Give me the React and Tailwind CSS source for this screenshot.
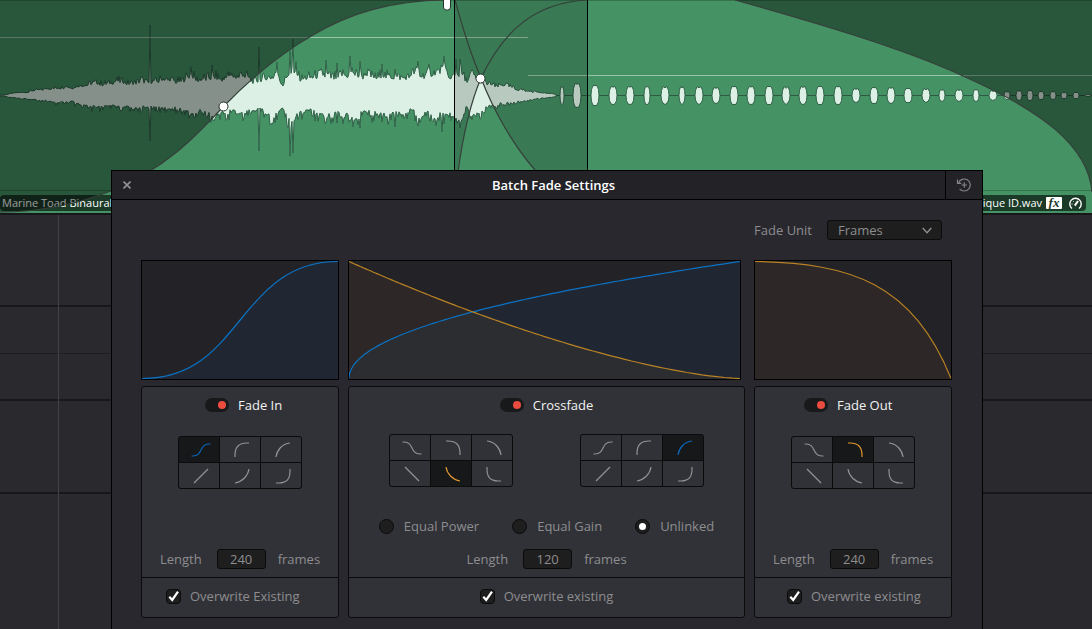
import React, { useState } from "react";

const MID = 95;

// [x, peak height] of the waveform envelope
const ENVELOPE = [
  [0, 0], [4, 0], [10, 2], [25, 4], [43, 8], [67, 12], [72, 10], [90, 18],
  [120, 19], [133, 18], [141, 23], [147, 16], [150, 17], [163, 23], [175, 19],
  [190, 27], [200, 23], [212, 30], [222, 25], [232, 28], [247, 28], [254, 20],
  [266, 28], [277, 32], [283, 17], [288, 36], [296, 36], [300, 25], [312, 28],
  [326, 32], [338, 28], [350, 34], [360, 32], [374, 28], [384, 32], [395, 27],
  [408, 26], [418, 33], [430, 29], [443, 34], [450, 24], [455, 34], [460, 36],
  [466, 22], [472, 28], [480, 25], [486, 17], [495, 13], [505, 15], [512, 10],
  [525, 7], [540, 4], [550, 2], [557, 1],
];

// [x, reach above, reach below]
const SPIKES = [
  [150, 70, 45], [259, 48, 55], [290, 44, 60], [293, 56, 57], [277, 33, 24],
  [326, 35, 26], [337, 32, 27], [350, 39, 24], [360, 34, 32], [382, 31, 26],
  [395, 26, 31], [418, 34, 30], [429, 31, 22], [444, 39, 28], [442, 28, 36],
  [456, 36, 22], [460, 36, 32], [191, 28, 18], [212, 30, 20],
];

// [centre, half width, half height] of the separate calls
const CALLS = [
  [562, 2, 9], [577, 4, 12], [595, 4, 10], [613, 4, 9], [630, 4, 9],
  [647, 3, 9], [665, 4, 9], [682, 3, 9], [699, 4, 9], [716, 4, 8],
  [734, 4, 9], [751, 4, 9], [769, 4, 9], [786, 4, 9], [803, 4, 9],
  [820, 4, 9], [838, 4, 9], [856, 4, 7], [874, 4, 8], [891, 4, 8],
  [908, 4, 7], [926, 4, 7], [942, 3, 6], [959, 4, 6], [976, 3, 6],
  [993, 4, 5], [1007, 3, 4], [1019, 3, 5], [1030, 3, 5], [1041, 3, 4],
  [1053, 3, 4], [1064, 3, 3], [1076, 3, 3], [1088, 3, 1],
];

const noise = (n) => {
  const v = Math.sin(n * 12.9898) * 43758.5453;
  return v - Math.floor(v);
};

const envelopeAt = (x) => {
  const i = ENVELOPE.findIndex((p) => p[0] > x);
  if (i < 1) return 0;
  const [x0, y0] = ENVELOPE[i - 1];
  const [x1, y1] = ENVELOPE[i];
  return y0 + ((y1 - y0) * (x - x0)) / (x1 - x0);
};

const buildWave = () => {
  const top = [];
  const bottom = [];
  for (let x = 0; x < 557; x++) {
    const env = envelopeAt(x);
    const spike = SPIKES.find((s) => s[0] === x);
    const up = spike
      ? spike[1]
      : env * (0.5 + 0.18 * noise(Math.floor(x / 5) + 7) + 0.32 * noise(x) ** 2);
    const down = spike
      ? spike[2]
      : env * (0.46 + 0.22 * noise(Math.floor(x / 5) + 51) + 0.32 * noise(x + 900) ** 2);
    top.push(`${x} ${(MID - up).toFixed(1)}`);
    bottom.unshift(`${x} ${(MID + 1 + down).toFixed(1)}`);
  }
  return `M${top.join("L")}L${bottom.join("L")}Z`;
};

const callPath = ([c, w, h]) => {
  const n = h * (0.8 + 0.2 * noise(c));
  const m = MID + 0.5;
  return `M${c - w} ${m}Q${c - w} ${m - n * 0.7} ${c - w / 2} ${m - h}L${c} ${m - n}L${c + w / 2} ${m - h}Q${c + w} ${m - n * 0.7} ${c + w} ${m}Q${c + w} ${m + n * 0.7} ${c + w / 2} ${m + n}L${c} ${m + h}L${c - w / 2} ${m + n}Q${c - w} ${m + n * 0.7} ${c - w} ${m}Z`;
};

const WAVE = buildWave();
const CALL_PATH = CALLS.map(callPath).join("");

const FADE_IN = "C40 212 80 203 111 191C165 169 195 137 223 107C253 76 285 51 313 35C350 13 390 1 445 0";
const FADE_OUT = "C810 21 900 47 963 76C1040 110 1088 145 1092 192";
const CROSS_OUT_TOP = "C461 22 471 55 481 78";
const CROSS_OUT_BOTTOM = "C494 112 514 146 535 170";
const CROSS_IN_TOP = "C502 34 532 3 587 0";

const curvePoints = (w, h, fn) => {
  const pts = [];
  for (let i = 0; i <= 100; i++) {
    const t = (i / 100) ** 2;
    pts.push(`${(t * w).toFixed(1)} ${(h - 0.5 - fn(t) * (h - 1)).toFixed(1)}`);
  }
  return `M${pts.join("L")}`;
};

const BLUE = "#0b72c4";
const ORANGE = "#b98224";

const CURVES = [
  "M.5 14H2C7 14 8.500 11 10 8S13 2 18 2H19.500",
  "M3 15V13C3 5 7 1 15 1H17",
  "M3 15C4 8 9 2 17 1",
  "M3 15L17 1",
  "M3 15C10 14 16 8 17 1",
  "M3 15H6C14 15 17 11 17 3V1",
];
const CURVE_NAMES = ["S-curve", "Fast", "Convex", "Linear", "Concave", "Slow"];

function Timeline() {
  return (
    <div className="flex min-h-screen flex-col">
      <section className="relative h-[213px] shrink-0 overflow-hidden bg-[#459265]">
        <svg className="absolute inset-0 h-full w-full" viewBox="0 0 1092 213" preserveAspectRatio="none">
          <path d="M0 .5H1092M0 190.500H1092" stroke="#000" strokeOpacity=".22" />
          <path d="M0 95.500H1092" stroke="#2c5a42" />
          <path d={WAVE + CALL_PATH} fill="#dcf0e5" stroke="#2f6147" strokeWidth="1" />
          <path d="M0 37.500H528M528 75.500H1092" stroke="#fff" strokeOpacity=".45" />
        </svg>

        {/* clip names */}
        <div className="absolute inset-x-0 bottom-0 flex h-[18px] pr-[6px] pb-[2px]">
          <div className="flex flex-1 items-center justify-between rounded-sm bg-black/60 pr-1 pl-[2px] text-[11px] leading-4 text-white">
            <span>Marine Toad Binaural</span>
            <div className="flex items-center">
              <span>ique ID.wav</span>
              <span className="mr-[7px] ml-1 flex h-3 w-4 items-center justify-center rounded-[1px] bg-white font-['Liberation_Serif',serif] text-[13px] font-bold text-[#1c3929] italic">
                fx
              </span>
              <svg width="13" height="13" viewBox="0 0 13 13" fill="none" stroke="#fff" strokeWidth="1.400">
                <path d="M3 11.500A5.700 5.700 0 1 1 10 11.500" />
                <path d="M5.800 8.600L9 4" strokeWidth="2" />
                <path d="M2.500 7h1M4 4l.6.6" strokeWidth="1" />
              </svg>
            </div>
          </div>
        </div>

        {/* fade shading and handles */}
        <svg className="absolute inset-0 h-full w-full" viewBox="0 0 1092 213" preserveAspectRatio="none" fill="none">
          <path d={`M0 212${FADE_IN}H0Z`} fill="#000" fillOpacity=".4" />
          <path d={`M735 0${FADE_OUT}V0Z`} fill="#000" fillOpacity=".4" />
          <path
            d={`M455 0H587V213H535V170C514 146 494 112 481 78C470 104 463 135 458 172V213H455Z`}
            fill="#000"
            fillOpacity=".16"
          />
          <g stroke="#35403a" strokeWidth="1.200">
            <path d={`M0 212${FADE_IN}`} />
            <path d={`M735 0${FADE_OUT}`} />
            <path d={`M455 0${CROSS_OUT_TOP}${CROSS_OUT_BOTTOM}`} />
            <path d={`M458 172C463 135 470 104 481 78${CROSS_IN_TOP}`} />
          </g>
          <path d="M454.500 0V213M587.500 0V213" stroke="#000" />
          <g fill="#fff" stroke="#26332b" strokeWidth="1">
            <circle cx="223.500" cy="106.500" r="4.500" />
            <circle cx="480.500" cy="78.500" r="4.500" />
            <rect x="443.500" y="-6" width="7" height="16" rx="3" />
          </g>
        </svg>
      </section>

      {/* empty tracks */}
      <div className="relative flex flex-1 flex-col border-t-2 border-[#18171b] bg-[#2a292e]">
        <div className="h-[92px] border-b-2 border-[#18171b]"></div>
        <div className="h-[47px] border-b border-[#1e1d21]"></div>
        <div className="h-[47px] border-b-2 border-[#18171b]"></div>
        <div className="h-[93px] border-b-2 border-[#18171b]"></div>
        <div className="absolute inset-y-0 left-[58px] w-px bg-[#424146]"></div>
      </div>
    </div>
  );
}

function Graph({ width, lines, className = "" }) {
  return (
    <div className={`h-[120px] border border-black bg-[#232227] ${className}`}>
      <svg className="block h-full w-full" viewBox={`0 0 ${width} 118`} preserveAspectRatio="none" fill="none">
        {lines.map((l) => (
          <path key={l.color} d={`${l.d}L${width} 118L0 118Z`} fill={l.color} fillOpacity=".07" />
        ))}
        {lines.map((l) => (
          <path key={l.color} d={l.d} stroke={l.color} strokeWidth="1.200" />
        ))}
      </svg>
    </div>
  );
}

function CurvePicker({ label, out, initial }) {
  const [selected, setSelected] = useState(initial);
  const activeColor = out ? "text-[#e0962c]" : "text-[#0b66b8]";

  return (
    <div
      role="group"
      aria-label={label}
      className="grid grid-cols-3 gap-px overflow-hidden rounded-[3px] border border-[#0b0b0c] bg-[#0b0b0c]"
    >
      {CURVES.map((d, i) => (
        <button
          key={d}
          type="button"
          aria-label={CURVE_NAMES[i]}
          aria-pressed={selected === i}
          onClick={() => setSelected(i)}
          className={`flex h-[25px] w-10 items-center justify-center pl-[3px] ${
            selected === i ? `bg-[#17181a] ${activeColor}` : "bg-[#313237] text-[#929294]"
          }`}
        >
          <svg
            width="20"
            height="16"
            viewBox="0 0 20 16"
            fill="none"
            stroke="currentColor"
            strokeWidth="1.200"
            className={out ? "-scale-x-100" : ""}
          >
            <path d={d} />
          </svg>
        </button>
      ))}
    </div>
  );
}

function FadeCard({ id, title, overwriteLabel, length, headClass, footClass, children }) {
  const [enabled, setEnabled] = useState(true);
  const [value, setValue] = useState(length);
  const [overwrite, setOverwrite] = useState(true);

  return (
    <section className="flex h-[232px] flex-col rounded-[3px] border border-[#0b0b0c] bg-[#313237]">
      <div className={`flex h-9 items-center gap-[9px] ${headClass}`}>
        <button
          type="button"
          role="switch"
          aria-checked={enabled}
          aria-labelledby={`${id}-title`}
          onClick={() => setEnabled(!enabled)}
          className={`flex h-[14px] w-6 items-center rounded-full bg-[#18191a] px-[3px] ${
            enabled ? "justify-end" : "justify-start"
          }`}
        >
          <span className={`size-2 rounded-full ${enabled ? "bg-[#ea4d3f]" : "bg-[#77777a]"}`}></span>
        </button>
        <h2 id={`${id}-title`} className="text-[#f2f2f2]">
          {title}
        </h2>
      </div>

      <div className="flex flex-1 flex-col">{children}</div>

      <div className="flex h-9 items-center justify-center">
        <label htmlFor={`${id}-length`}>Length</label>
        <input
          id={`${id}-length`}
          type="text"
          value={value}
          onChange={(e) => setValue(e.target.value)}
          className="mr-3 ml-[15px] h-5 w-[49px] rounded-[3px] border border-[#0b0b0c] bg-[#1e1e1e] text-center"
        />
        <span>frames</span>
      </div>

      <div className={`flex h-10 items-center border-t border-[#0b0b0c] pb-[3px] ${footClass}`}>
        <label className="flex items-center gap-[9px]">
          <span className="relative flex">
            <input
              type="checkbox"
              checked={overwrite}
              onChange={(e) => setOverwrite(e.target.checked)}
              className="size-[15px] appearance-none rounded-sm border border-[#0b0b0c] bg-[#1e1e1e]"
            />
            {overwrite && (
              <svg
                className="pointer-events-none absolute inset-0"
                width="15"
                height="15"
                viewBox="0 0 15 15"
                fill="none"
                stroke="#fff"
                strokeWidth="2.200"
              >
                <path d="M3.300 7.800L6.200 11L12 2.600" />
              </svg>
            )}
          </span>
          {overwriteLabel}
        </label>
      </div>
    </section>
  );
}

function LinkMode() {
  const [mode, setMode] = useState("Unlinked");

  return (
    <div className="mt-auto mb-[6px] flex justify-center gap-[33px]">
      {["Equal Power", "Equal Gain", "Unlinked"].map((m) => (
        <label key={m} className="flex items-center gap-[10px]">
          <input
            type="radio"
            name="link-mode"
            checked={mode === m}
            onChange={() => setMode(m)}
            className="grid size-[15px] appearance-none place-content-center rounded-full border border-[#0b0b0c] bg-[#1e1e1e] before:size-[7px] before:rounded-full checked:before:bg-white"
          />
          {m}
        </label>
      ))}
    </div>
  );
}

export default function App() {
  const [unit, setUnit] = useState("Frames");

  return (
    <main className="relative min-h-screen overflow-hidden bg-[#2a292e] font-['Open_Sans','Noto_Sans',sans-serif] text-[13px] leading-[18px] text-[#8d8d8f]">
      <Timeline />

      <div className="absolute inset-0 flex pt-[170px] pr-[109px] pl-[111px]">
        <div
          role="dialog"
          aria-labelledby="dialog-title"
          className="flex flex-1 flex-col border-x border-t border-black bg-[#29282e]"
        >
          <header className="flex h-[29px] border-b border-black bg-[#232227]">
            <button type="button" aria-label="Close" className="flex w-[30px] items-center justify-center">
              <svg width="8" height="8" viewBox="0 0 8 8" stroke="#929294" strokeWidth="1.600">
                <path d="M.5 .5L7.500 7.500M7.500 .5L.5 7.500" />
              </svg>
            </button>
            <h1
              id="dialog-title"
              className="flex flex-1 items-center justify-center pl-5 font-semibold text-white"
            >
              Batch Fade Settings
            </h1>
            <button
              type="button"
              aria-label="Reset"
              className="flex w-[37px] items-center justify-center border-l border-black"
            >
              <svg width="16" height="14" viewBox="0 0 16 14" fill="none" stroke="#858587" strokeWidth="1.200">
                <path d="M2.600 5A6 6 0 1 1 3.600 10.800" />
                <path d="M1.500 1.500V5.300H5.300" />
                <path d="M8.300 4.300V9.700M5.600 7H11" />
              </svg>
            </button>
          </header>

          <div className="flex flex-1 flex-col pt-5 pr-[30px] pl-[29px]">
            <div className="flex h-5 items-center justify-end gap-[15px] pr-[10px]">
              <label htmlFor="fade-unit">Fade Unit</label>
              <div className="relative flex">
                <select
                  id="fade-unit"
                  value={unit}
                  onChange={(e) => setUnit(e.target.value)}
                  className="h-5 w-[115px] appearance-none rounded-[3px] border border-[#0b0b0c] bg-[#1e1e1e] pl-[10px]"
                >
                  <option>Frames</option>
                </select>
                <svg
                  className="pointer-events-none absolute top-[7px] right-[10px]"
                  width="10"
                  height="7"
                  viewBox="0 0 10 7"
                  fill="none"
                  stroke="#929294"
                  strokeWidth="1.300"
                >
                  <path d="M.7 1L5 5.800L9.300 1" />
                </svg>
              </div>
            </div>

            <div className="mt-5 grid grid-cols-[198fr_397fr_198fr] gap-x-[9px] gap-y-[6px]">
              <Graph
                width={196}
                lines={[{ color: BLUE, d: "M0 117.500C50 117.500 73 90 99 58C123 28 148 .5 196 .5" }]}
              />
              <Graph
                width={391}
                className="mr-1"
                lines={[
                  { color: BLUE, d: curvePoints(391, 118, (t) => t ** 0.49) },
                  { color: ORANGE, d: curvePoints(391, 118, (t) => (1 - t) ** 1.48) },
                ]}
              />
              <Graph
                width={196}
                lines={[{ color: ORANGE, d: "M0 .5C95 2 158 22 196 117.500" }]}
              />

              <FadeCard
                id="fade-in"
                title="Fade In"
                overwriteLabel="Overwrite Existing"
                length="240"
                headClass="pl-[63px]"
                footClass="pl-6"
              >
                <div className="mt-[13px] flex justify-center">
                  <CurvePicker label="Fade in curve" initial={0} />
                </div>
              </FadeCard>

              <FadeCard
                id="crossfade"
                title="Crossfade"
                overwriteLabel="Overwrite existing"
                length="120"
                headClass="justify-center"
                footClass="justify-center"
              >
                <div className="mt-[11px] flex justify-center gap-[67px]">
                  <CurvePicker label="Crossfade out curve" out initial={4} />
                  <CurvePicker label="Crossfade in curve" initial={2} />
                </div>
                <LinkMode />
              </FadeCard>

              <FadeCard
                id="fade-out"
                title="Fade Out"
                overwriteLabel="Overwrite existing"
                length="240"
                headClass="pl-[49px]"
                footClass="pl-8"
              >
                <div className="mt-[13px] flex justify-center">
                  <CurvePicker label="Fade out curve" out initial={1} />
                </div>
              </FadeCard>
            </div>
          </div>
        </div>
      </div>
    </main>
  );
}
